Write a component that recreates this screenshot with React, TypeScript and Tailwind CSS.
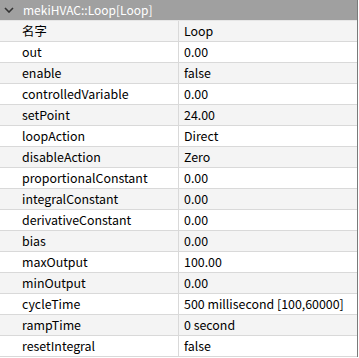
const rows: [string, string][] = [
  ["名字", "Loop"],
  ["out", "0.00"],
  ["enable", "false"],
  ["controlledVariable", "0.00"],
  ["setPoint", "24.00"],
  ["loopAction", "Direct"],
  ["disableAction", "Zero"],
  ["proportionalConstant", "0.00"],
  ["integralConstant", "0.00"],
  ["derivativeConstant", "0.00"],
  ["bias", "0.00"],
  ["maxOutput", "100.00"],
  ["minOutput", "0.00"],
  ["cycleTime", "500 millisecond [100,60000]"],
  ["rampTime", "0 second"],
  ["resetIntegral", "false"],
];

export default function App() {
  return (
    <div
      className="w-[359px] h-[358px] bg-white overflow-hidden"
      style={{ fontFamily: '"Noto Sans CJK SC", "Microsoft YaHei", sans-serif' }}
    >
      <div className="w-[358px] border-r border-[#7a7a7a] text-[12.4px] text-black">
        <div className="h-[21px] flex items-center bg-[#a0a0a0] border-b border-[#e6e6e6]">
          <svg width="10" height="6" viewBox="0 0 10 6" className="ml-[4px] mr-[9px]">
            <path d="M1 1 L5 5 L9 1" fill="none" stroke="#333" strokeWidth="1.6" />
          </svg>
          <span className="text-white text-[12px]">mekiHVAC::Loop[Loop]</span>
        </div>
        {rows.map(([name, value], i) => (
          <div
            key={name}
            className={`h-[21px] flex border-b border-[#d9d9d9] ${i % 2 === 0 ? "bg-[#f4f4f4]" : "bg-white"}`}
          >
            <div className="w-[179px] shrink-0 pl-[22px] flex items-center border-r border-[#d9d9d9]">{name}</div>
            <div className="flex-1 pl-[5px] flex items-center">{value}</div>
          </div>
        ))}
      </div>
    </div>
  );
}
